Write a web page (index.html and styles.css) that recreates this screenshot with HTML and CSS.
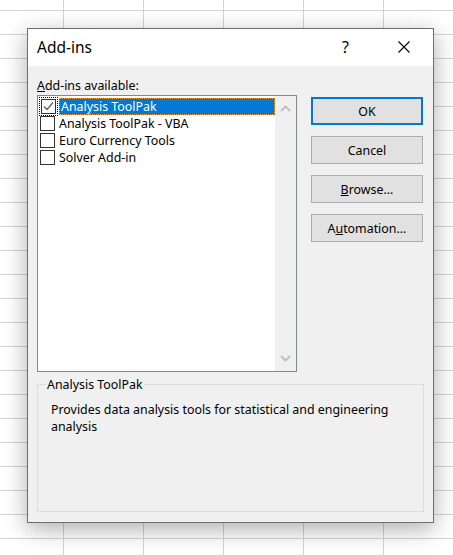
FILE: index.html
```html
<!DOCTYPE html>
<html>
<head>
<meta charset="utf-8">
<link rel="stylesheet" href="styles.css">
</head>
<body>
<div class="sheet">
  <div class="dialog">
    <div class="titlebar">
      <span class="title">Add-ins</span>
      <span class="help">?</span>
      <svg class="close" width="12" height="12" viewBox="0 0 12 12"><path d="M0.5 0.5 L11.5 11.5 M11.5 0.5 L0.5 11.5" stroke="#000" stroke-width="1.1" fill="none"/></svg>
    </div>
    <div class="content">
      <div class="main">
        <div class="left">
          <div class="label"><u>A</u>dd-ins available:</div>
          <div class="list">
            <div class="items">
              <div class="row">
                <span class="focusbox"><span class="box checked"><svg width="13" height="13" viewBox="0 0 13 13"><path d="M2 6.5 L5 9.5 L11 2.5" stroke="#5a5a5a" stroke-width="1.2" fill="none"/></svg></span></span>
                <span class="text selected">Analysis ToolPak</span>
              </div>
              <div class="row"><span class="box"></span><span class="text">Analysis ToolPak - VBA</span></div>
              <div class="row"><span class="box"></span><span class="text">Euro Currency Tools</span></div>
              <div class="row"><span class="box"></span><span class="text">Solver Add-in</span></div>
            </div>
            <div class="scrollbar">
              <svg class="arrow" width="11" height="7" viewBox="0 0 11 7"><path d="M1 6 L5.5 1.5 L10 6" stroke="#c2c2c2" stroke-width="2" fill="none"/></svg>
              <svg class="arrow" width="11" height="7" viewBox="0 0 11 7"><path d="M1 1 L5.5 5.5 L10 1" stroke="#c2c2c2" stroke-width="2" fill="none"/></svg>
            </div>
          </div>
        </div>
        <div class="buttons">
          <button class="btn default">OK</button>
          <button class="btn">Cancel</button>
          <button class="btn"><u>B</u>rowse...</button>
          <button class="btn">A<u>u</u>tomation...</button>
        </div>
      </div>
      <fieldset class="group">
        <legend>Analysis ToolPak</legend>
        <p class="desc">Provides data analysis tools for statistical and engineering analysis</p>
      </fieldset>
    </div>
  </div>
</div>
</body>
</html>
```

FILE: styles.css
```css
html, body {
  margin: 0;
  padding: 0;
}
body {
  width: 453px;
  height: 555px;
  overflow: hidden;
  background-color: #ffffff;
  background-image:
    linear-gradient(to right, #d4d4d4 1px, transparent 1px),
    linear-gradient(to bottom, #d4d4d4 1px, transparent 1px);
  background-size: 80px 24px;
  background-position: 63px 10px;
  font-family: "Noto Sans", "Open Sans", sans-serif;
  font-size: 12.4px;
  color: #000;
}
.sheet {
  padding: 28px 0 0 27px;
}
.dialog {
  width: 405px;
  height: 493px;
  border: 1px solid #6e6e6e;
  background: #f0f0f0;
  box-shadow: 0 6px 22px rgba(0, 0, 0, 0.32);
  display: flex;
  flex-direction: column;
}
.titlebar {
  height: 37px;
  background: #ffffff;
  display: flex;
  align-items: center;
  padding-left: 9px;
  flex: none;
}
.title {
  font-size: 15.5px;
  flex: 1;
  padding-bottom: 2px;
}
.help {
  font-size: 16px;
  margin-right: 49px;
  padding-bottom: 2px;
}
.close {
  margin-right: 23px;
  margin-bottom: 1px;
}
.content {
  flex: 1;
  display: flex;
  flex-direction: column;
  padding: 11px 9px 10px 9px;
}
.main {
  display: flex;
  gap: 14px;
}
.left {
  display: flex;
  flex-direction: column;
}
.label {
  line-height: 17px;
  height: 17px;
  margin-bottom: 1px;
}
.list {
  width: 258px;
  height: 275px;
  border: 1px solid #828790;
  background: #ffffff;
  display: flex;
}
.items {
  flex: 1;
  padding-top: 2px;
}
.row {
  height: 17px;
  display: flex;
  align-items: center;
  padding-left: 1px;
}
.box {
  width: 13px;
  height: 13px;
  border: 1px solid #333333;
  margin: 0 2px 0 1px;
  background: #fff;
  display: flex;
  flex: none;
}
.focusbox {
  display: flex;
  border: 1px dotted #000;
  padding: 0;
  margin-right: 1px;
}
.focusbox .box {
  margin: 1px;
}
.text {
  line-height: 15px;
  height: 15px;
  padding: 0 1px;
  border: 1px solid transparent;
  white-space: nowrap;
}
.text.selected {
  flex: 1;
  background: #0078d7;
  color: #ffffff;
  border: 1px dotted #f3a33a;
}
.scrollbar {
  width: 21px;
  background: #f0f0f0;
  display: flex;
  flex-direction: column;
  justify-content: space-between;
  align-items: center;
  padding: 9px 0 9px 0;
}
.buttons {
  display: flex;
  flex-direction: column;
  gap: 11px;
  margin-top: 20px;
}
.btn {
  width: 112px;
  height: 28px;
  font: inherit;
  color: #000;
  background: #e1e1e1;
  border: 1px solid #adadad;
  padding: 0;
  margin: 0;
}
.btn.default {
  border: 2px solid #0078d7;
}
.group {
  flex: 1;
  margin: 4px 0 0 0;
  border: 1px solid #dcdcdc;
  padding: 0 12px 0 13px;
  min-width: 0;
}
.group legend {
  padding: 0 1px;
  margin-left: -5px;
  line-height: 17px;
}
.desc {
  margin: 8px 0 0 0;
  line-height: 17px;
}
```
